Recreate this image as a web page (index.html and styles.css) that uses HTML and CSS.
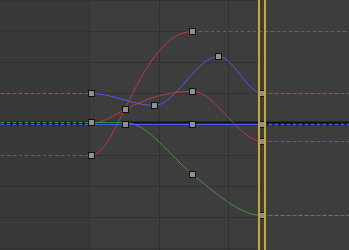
FILE: index.html
```html
<!DOCTYPE html>
<html lang="en">
<head>
    <meta charset="UTF-8">
    <meta name="viewport" content="width=device-width, initial-scale=1.0">
    <title>Graph Editor</title>
    <link rel="stylesheet" href="styles.css">
</head>
<body>
    <div class="editor">
        <svg class="graph" width="349" height="250" viewBox="0 0 349 250">
            <!-- frames before the scene start are shaded -->
            <rect class="outside" x="0" y="0" width="90" height="250"/>

            <g class="grid" transform="translate(0.5 0.5)">
                <path d="M0 0H258 M0 31H258 M0 62H258 M0 93H258 M0 124H258 M0 155H258 M0 186H258 M0 217H258 M0 248H258"/>
                <path d="M89 0V250 M159 0V250 M228 0V250"/>
            </g>

            <g class="curves" transform="translate(0.5 0.5)">
                <!-- active channel gets a dark outline -->
                <path class="outline" d="M0 123H349"/>

                <path class="curve red dashed" d="M0 155H91 M192 31H349 M262 141H349"/>
                <path class="curve red" d="M91 155 C116 155 142 31 192 31"/>
                <path class="curve red" d="M91 123 C102 123 114 114 125 109 C150 96 169 91 192 91 C215 91 239 141 262 141"/>

                <path class="curve green dashed" d="M0 122H91 M262 215H349"/>
                <path class="curve green" d="M91 122H125 C147 122 170 156 192 174 C215 192 239 215 262 215"/>

                <path class="curve blue dashed" d="M0 93H91 M262 93H349"/>
                <path class="curve blue" d="M91 93 C112 93 133 105 154 105 C175 105 196 56 218 56 C233 56 247 93 262 93"/>
                <path class="curve blue active dashed" d="M0 124H91 M262 124H349"/>
                <path class="curve blue active" d="M91 124H262"/>
            </g>

            <g class="keys" transform="translate(0.5 0.5)">
                <rect x="88" y="90" width="6" height="6"/>
                <rect x="88" y="119" width="6" height="6"/>
                <rect x="88" y="152" width="6" height="6"/>
                <rect x="122" y="106" width="6" height="6"/>
                <rect x="122" y="121" width="6" height="6"/>
                <rect x="151" y="102" width="6" height="6"/>
                <rect x="189" y="28" width="6" height="6"/>
                <rect x="189" y="88" width="6" height="6"/>
                <rect x="189" y="121" width="6" height="6"/>
                <rect x="189" y="171" width="6" height="6"/>
                <rect x="215" y="53" width="6" height="6"/>
                <rect x="259" y="90" width="6" height="6"/>
                <rect x="259" y="121" width="6" height="6"/>
                <rect x="259" y="138" width="6" height="6"/>
                <rect x="259" y="212" width="6" height="6"/>
            </g>

            <g class="playhead">
                <rect x="258" y="0" width="2" height="250"/>
                <rect x="264" y="0" width="2" height="250"/>
            </g>
        </svg>
    </div>
</body>
</html>
```

FILE: styles.css
```css
body {
    margin: 0;
    background: #3d3d3d;
    font-family: 'Liberation Sans', sans-serif;
    overflow: hidden;
}

.editor {
    width: 349px;
    height: 250px;
    background: #3d3d3d;
}

.graph {
    display: block;
}

.outside {
    fill: #393939;
}

.grid path {
    fill: none;
    stroke: #313131;
    stroke-width: 1;
}

.curve {
    fill: none;
    stroke-width: 1;
}

.curve.dashed {
    stroke-dasharray: 4 2;
}

.red {
    stroke: #c23b3b;
}

.green {
    stroke: #3c9a3c;
}

.blue {
    stroke: #4a5cf5;
}

.blue.active {
    stroke-width: 1.6;
}

.outline {
    fill: none;
    stroke: #141414;
    stroke-width: 4;
}

.keys rect {
    fill: #8f8f8f;
    stroke: #111111;
    stroke-width: 1;
}

.playhead rect {
    fill: #c9a92c;
}
```
